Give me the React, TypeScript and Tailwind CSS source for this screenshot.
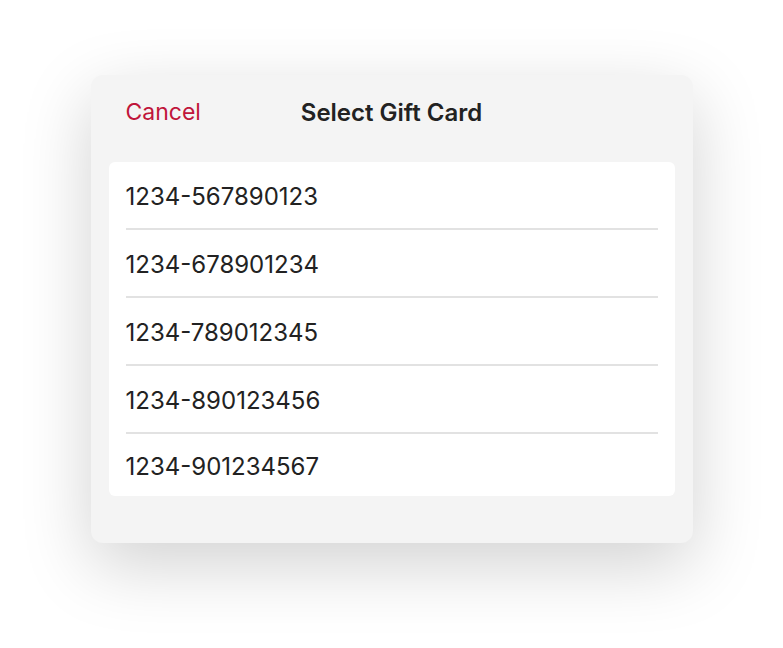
import React from "react";

const cards = [
  "1234-567890123",
  "1234-678901234",
  "1234-789012345",
  "1234-890123456",
  "1234-901234567",
];

export default function App() {
  return (
    <div
      className="min-h-[648px] w-full bg-white pt-[75px] flex justify-center"
      style={{ fontFamily: "Inter, 'Noto Sans', sans-serif" }}
    >
      <div className="w-[602px] h-[468px] rounded-[12px] bg-[#f4f4f4] shadow-[0_22px_70px_rgba(0,0,0,0.18)] px-[18px] flex flex-col">
        <div className="h-[87px] pb-[12px] grid grid-cols-[1fr_auto_1fr] items-center">
          <button className="justify-self-start pl-[17px] text-[23px] text-[#c0153a]">
            Cancel
          </button>
          <h1 className="text-[24px] font-semibold text-[#222]">
            Select Gift Card
          </h1>
          <div />
        </div>
        <div className="bg-white rounded-[6px] px-[17px]">
          {cards.map((c, i) => (
            <div
              key={c}
              className={`flex items-center pt-[3px] text-[24px] text-[#222] ${
                i < cards.length - 1
                  ? "h-[68px] border-b-2 border-[#e2e2e2]"
                  : "h-[62px]"
              }`}
            >
              {c}
            </div>
          ))}
        </div>
      </div>
    </div>
  );
}
